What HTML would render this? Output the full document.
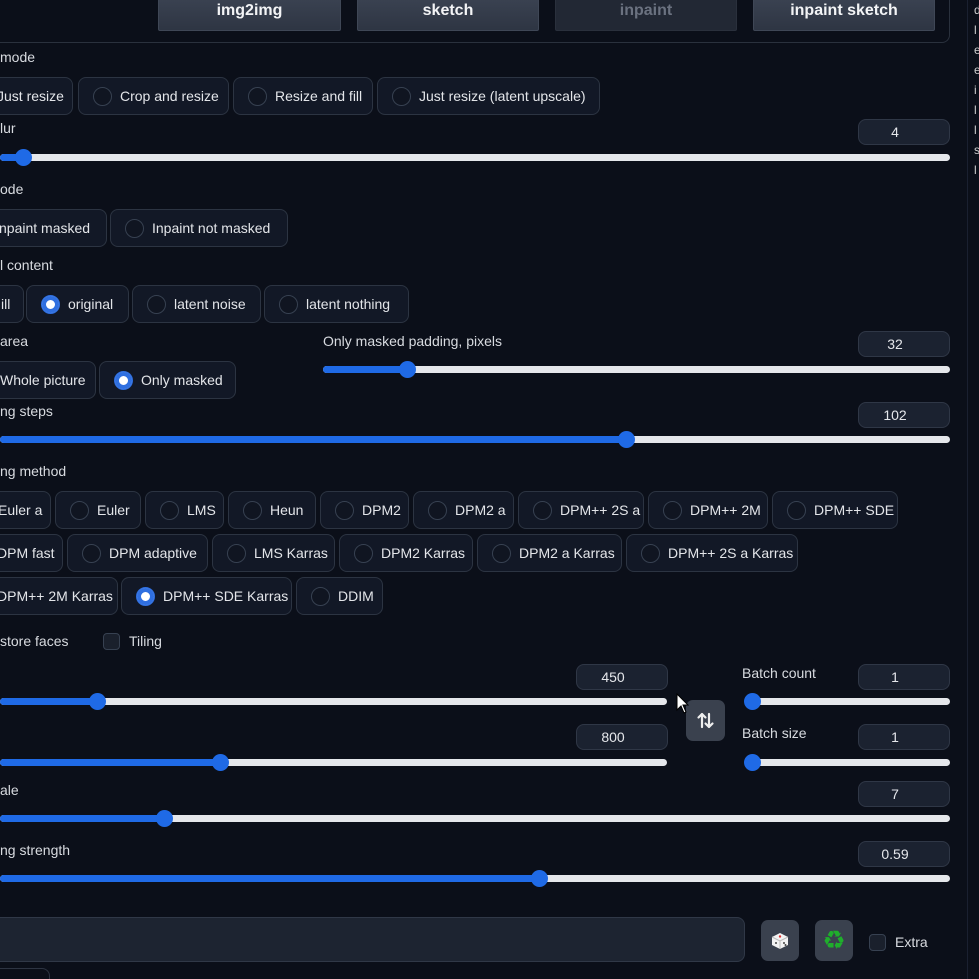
<!DOCTYPE html>
<html><head><meta charset="utf-8"><style>
html,body{margin:0;width:979px;height:979px;overflow:hidden}
body{background:#0b0f19;position:relative;font-family:"Liberation Sans",sans-serif;color:#d4d7dd;font-size:14px}
div{position:absolute;box-sizing:border-box}
.lbl{font-size:14px;color:#d8dbe0;white-space:nowrap;line-height:16px}
.pill{background:#121826;border:1px solid #2c3442;border-radius:8px;height:38px;display:flex;align-items:center;white-space:nowrap;font-size:14px;color:#e3e5e9}
.pill.n{padding-left:14px}
.r{position:static;width:17px;height:17px;border-radius:50%;border:1px solid #374151;background:#101521;margin-right:8px;flex:none}
.r.s{background:#2f6fe0;border-color:#2f6fe0;box-shadow:inset 0 0 0 4px #2f6fe0,inset 0 0 0 10px #fff}
.btn{background:linear-gradient(#3a4251,#2e3543);border:1px solid #3f4756;color:#f3f4f6;font-weight:bold;font-size:16px;text-align:center;line-height:24px;border-radius:2px;top:-2px;height:33px}
.num{background:#1b2230;border:1px solid #2f3746;border-radius:8px;height:26px;width:92px;text-align:center;line-height:24px;color:#e5e7eb;font-size:14px;padding-right:18px}
.tr{height:7px;background:#e5e7eb;border-radius:4px}
.fl{height:7px;background:#1f6ae6;border-radius:4px 0 0 4px;left:0;top:0}
.th{width:17px;height:17px;border-radius:50%;background:#1f6ae6;top:-5px}
.cb{width:17px;height:17px;border:1px solid #374151;background:#1a202c;border-radius:4px}
</style></head><body>
<div style="left:0;top:-10px;width:950px;height:53px;border:1px solid #2a313d;border-top:none;border-left:none;border-radius:0 0 8px 0"></div>
<div class="btn" style="left:158px;width:183px">img2img</div>
<div class="btn" style="left:357px;width:182px">sketch</div>
<div class="btn" style="left:555px;width:182px;background:#222834;color:#6b7280;border-color:#2a303c">inpaint</div>
<div class="btn" style="left:753px;width:182px">inpaint sketch</div>
<div style="left:967px;top:0;width:1px;height:979px;background:#1a2030"></div>
<div style="left:974px;top:0;width:5px;height:320px;color:#ccc;font-size:12px;line-height:20px">d<br>l<br>e<br>e<br>i<br>l<br>l<br>s<br>l</div>

<div class="lbl" style="left:0;top:49px">mode</div>
<div class="pill" style="left:-10px;top:77px;width:83px;padding-left:6px">Just resize</div>
<div class="pill n" style="left:78px;top:77px;width:151px"><i class="r"></i>Crop and resize</div>
<div class="pill n" style="left:233px;top:77px;width:140px"><i class="r"></i>Resize and fill</div>
<div class="pill n" style="left:377px;top:77px;width:223px"><i class="r"></i>Just resize (latent upscale)</div>

<div class="lbl" style="left:0;top:120px">lur</div>
<div class="num" style="left:858px;top:119px">4</div>
<div class="tr" style="left:0;top:154px;width:950px"><div class="fl" style="width:23px"></div><div class="th" style="left:15px"></div></div>

<div class="lbl" style="left:0;top:181px">ode</div>
<div class="pill" style="left:-10px;top:209px;width:117px;padding-left:8px">npaint masked</div>
<div class="pill n" style="left:110px;top:209px;width:178px"><i class="r"></i>Inpaint not masked</div>

<div class="lbl" style="left:0;top:257px">l content</div>
<div class="pill" style="left:-10px;top:285px;width:34px;padding-left:10px">ill</div>
<div class="pill n" style="left:26px;top:285px;width:103px"><i class="r s"></i>original</div>
<div class="pill n" style="left:132px;top:285px;width:129px"><i class="r"></i>latent noise</div>
<div class="pill n" style="left:264px;top:285px;width:145px"><i class="r"></i>latent nothing</div>

<div class="lbl" style="left:0;top:333px">area</div>
<div class="pill" style="left:-10px;top:361px;width:106px;padding-left:9px">Whole picture</div>
<div class="pill n" style="left:99px;top:361px;width:137px"><i class="r s"></i>Only masked</div>
<div class="lbl" style="left:323px;top:333px">Only masked padding, pixels</div>
<div class="num" style="left:858px;top:331px">32</div>
<div class="tr" style="left:323px;top:366px;width:627px"><div class="fl" style="width:84px"></div><div class="th" style="left:76px"></div></div>

<div class="lbl" style="left:0;top:403px">ng steps</div>
<div class="num" style="left:858px;top:402px">102</div>
<div class="tr" style="left:0;top:436px;width:950px"><div class="fl" style="width:626px"></div><div class="th" style="left:618px"></div></div>

<div class="lbl" style="left:0;top:463px">ng method</div>
<div class="pill" style="left:-10px;top:491px;width:61px;padding-left:7px">Euler a</div>
<div class="pill n" style="left:55px;top:491px;width:86px"><i class="r"></i>Euler</div>
<div class="pill n" style="left:145px;top:491px;width:79px"><i class="r"></i>LMS</div>
<div class="pill n" style="left:228px;top:491px;width:88px"><i class="r"></i>Heun</div>
<div class="pill n" style="left:320px;top:491px;width:89px"><i class="r"></i>DPM2</div>
<div class="pill n" style="left:413px;top:491px;width:101px"><i class="r"></i>DPM2 a</div>
<div class="pill n" style="left:518px;top:491px;width:126px"><i class="r"></i>DPM++ 2S a</div>
<div class="pill n" style="left:648px;top:491px;width:120px"><i class="r"></i>DPM++ 2M</div>
<div class="pill n" style="left:772px;top:491px;width:126px"><i class="r"></i>DPM++ SDE</div>

<div class="pill" style="left:-10px;top:534px;width:73px;padding-left:6px">DPM fast</div>
<div class="pill n" style="left:67px;top:534px;width:141px"><i class="r"></i>DPM adaptive</div>
<div class="pill n" style="left:212px;top:534px;width:123px"><i class="r"></i>LMS Karras</div>
<div class="pill n" style="left:339px;top:534px;width:134px"><i class="r"></i>DPM2 Karras</div>
<div class="pill n" style="left:477px;top:534px;width:145px"><i class="r"></i>DPM2 a Karras</div>
<div class="pill n" style="left:626px;top:534px;width:172px"><i class="r"></i>DPM++ 2S a Karras</div>

<div class="pill" style="left:-10px;top:577px;width:128px;padding-left:6px">DPM++ 2M Karras</div>
<div class="pill n" style="left:121px;top:577px;width:171px"><i class="r s"></i>DPM++ SDE Karras</div>
<div class="pill n" style="left:296px;top:577px;width:87px"><i class="r"></i>DDIM</div>

<div class="lbl" style="left:0;top:633px">store faces</div>
<div class="cb" style="left:103px;top:633px"></div>
<div class="lbl" style="left:129px;top:633px">Tiling</div>

<div class="num" style="left:576px;top:664px">450</div>
<div class="tr" style="left:0;top:698px;width:667px"><div class="fl" style="width:97px"></div><div class="th" style="left:89px"></div></div>
<div class="num" style="left:576px;top:724px">800</div>
<div class="tr" style="left:0;top:759px;width:667px"><div class="fl" style="width:220px"></div><div class="th" style="left:212px"></div></div>
<div style="left:686px;top:700px;width:39px;height:41px;background:#3a414e;border-radius:7px">
<svg width="39" height="41" viewBox="0 0 39 41"><g stroke="#eee" stroke-width="2.2" fill="none" stroke-linecap="round" stroke-linejoin="round"><path d="M16 27V14M12.5 17.5L16 14l3.5 3.5"/><path d="M23 14v13M19.5 23.5L23 27l3.5-3.5"/></g></svg></div>
<svg style="position:absolute;left:676px;top:693px" width="14" height="22" viewBox="0 0 14 22"><path d="M1 1v16l4-4 3 7 2-1-3-7h5z" fill="#fff" stroke="#000" stroke-width="1"/></svg>

<div class="lbl" style="left:742px;top:665px">Batch count</div>
<div class="num" style="left:858px;top:664px">1</div>
<div class="tr" style="left:751px;top:698px;width:199px"><div class="th" style="left:-7px"></div></div>
<div class="lbl" style="left:742px;top:725px">Batch size</div>
<div class="num" style="left:858px;top:724px">1</div>
<div class="tr" style="left:751px;top:759px;width:199px"><div class="th" style="left:-7px"></div></div>

<div class="lbl" style="left:0;top:782px">ale</div>
<div class="num" style="left:858px;top:781px">7</div>
<div class="tr" style="left:0;top:815px;width:950px"><div class="fl" style="width:164px"></div><div class="th" style="left:156px"></div></div>

<div class="lbl" style="left:0;top:842px">ng strength</div>
<div class="num" style="left:858px;top:841px">0.59</div>
<div class="tr" style="left:0;top:875px;width:950px"><div class="fl" style="width:539px"></div><div class="th" style="left:531px"></div></div>

<div style="left:-10px;top:917px;width:755px;height:45px;background:#1d2431;border:1px solid #303847;border-radius:8px"></div>
<div style="left:761px;top:920px;width:38px;height:41px;background:#3a414e;border-radius:7px">
<svg width="38" height="41" viewBox="0 0 38 41"><path d="M19 13l8 4v8l-8 4-8-4v-8z" fill="#f2f2f2"/><path d="M11 17l8 4 8-4M19 21v8" stroke="#bbb" fill="none"/><circle cx="19" cy="16.5" r="1.2" fill="#d33"/><circle cx="15" cy="23" r="1" fill="#444"/><circle cx="23" cy="23" r="1" fill="#444"/><circle cx="24.5" cy="25" r="1" fill="#444"/></svg></div>
<div style="left:815px;top:920px;width:38px;height:41px;background:#3a414e;border-radius:7px;color:#1fae2c;font-size:26px;text-align:center;line-height:41px">♻</div>
<div class="cb" style="left:869px;top:934px"></div>
<div class="lbl" style="left:895px;top:934px">Extra</div>
<div style="left:-10px;top:968px;width:60px;height:30px;border:1px solid #2d3442;border-radius:8px"></div>
</body></html>
